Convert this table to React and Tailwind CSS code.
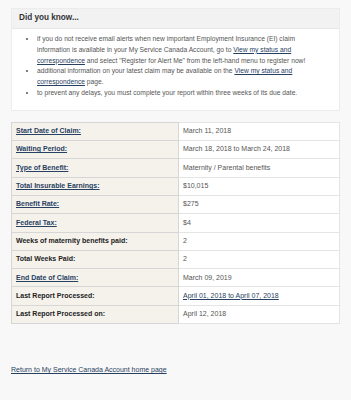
import React from "react";

const L = "text-[#284162] underline";

const rows = [
  { k: "Start Date of Claim:", link: true, v: "March 11, 2018" },
  { k: "Waiting Period:", link: true, v: "March 18, 2018 to March 24, 2018" },
  { k: "Type of Benefit:", link: true, v: "Maternity / Parental benefits" },
  { k: "Total Insurable Earnings:", link: true, v: "$10,015" },
  { k: "Benefit Rate:", link: true, v: "$275" },
  { k: "Federal Tax:", link: true, v: "$4" },
  { k: "Weeks of maternity benefits paid:", link: false, v: "2" },
  { k: "Total Weeks Paid:", link: false, v: "2" },
  { k: "End Date of Claim:", link: true, v: "March 09, 2019" },
  { k: "Last Report Processed:", link: false, v: "April 01, 2018 to April 07, 2018", vlink: true },
  { k: "Last Report Processed on:", link: false, v: "April 12, 2018" },
];

export default function App() {
  return (
    <div
      className="w-[351px] h-[400px] bg-[#f8f8f8] text-[#333] overflow-hidden"
      style={{ fontFamily: '"Liberation Sans", Arial, sans-serif' }}
    >
      <div className="pt-[8px] px-[11px]">
        <div className="border border-[#ececec] bg-white">
          <div className="h-[20px] bg-[#f2f2f2] border-b border-[#e6e6e6] flex items-center px-[7px] text-[8.2px] font-bold text-[#333]">
            Did you know...
          </div>
          <ul className="pl-[25px] pr-[4px] pt-[5px] pb-[11px] text-[6.7px] leading-[10.8px] list-disc text-[#555] whitespace-nowrap">
            <li>
              if you do not receive email alerts when new important Employment Insurance (EI) claim
              <br />
              information is available in your My Service Canada Account, go to{" "}
              <span className={L}>
                View my status and
                <br />
                correspondence
              </span>{" "}
              and select "Register for Alert Me" from the left-hand menu to register now!
            </li>
            <li>
              additional information on your latest claim may be available on the{" "}
              <span className={L}>
                View my status and
                <br />
                correspondence
              </span>{" "}
              page.
            </li>
            <li>to prevent any delays, you must complete your report within three weeks of its due date.</li>
          </ul>
        </div>
      </div>

      <div className="px-[11px] pt-[11px]">
        <table className="w-[329px] border-collapse text-[7px]">
          <tbody>
            {rows.map((r, i) => (
              <tr key={i} className="h-[18.3px]">
                <td
                  className={
                    "w-[167px] bg-[#f5f2ec] border border-[#d6d6d6] px-[4px] font-bold " +
                    (r.link ? L : "text-[#222]")
                  }
                >
                  {r.k}
                </td>
                <td className="bg-white border border-[#e4e4e4] px-[4px] text-[#555]">
                  {r.vlink ? <span className={L}>{r.v}</span> : r.v}
                </td>
              </tr>
            ))}
          </tbody>
        </table>
      </div>

      <div className="px-[11px] pt-[41px] text-[7px]">
        <span className={L}>Return to My Service Canada Account home page</span>
      </div>
    </div>
  );
}
